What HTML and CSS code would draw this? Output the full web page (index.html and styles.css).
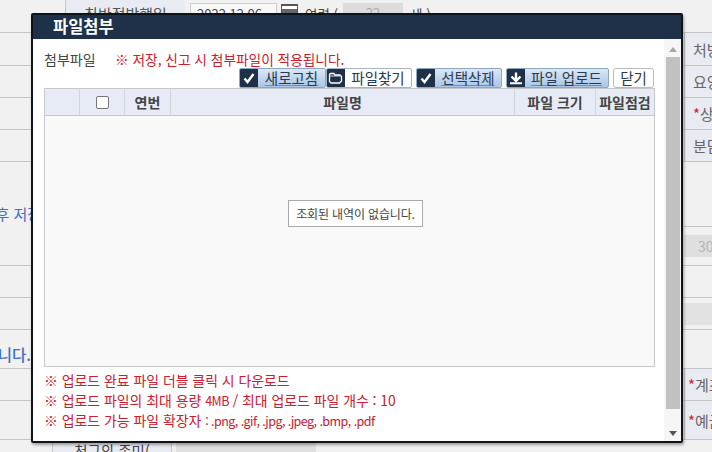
FILE: index.html
```html
<!DOCTYPE html>
<html lang="ko">
<head>
<meta charset="utf-8">
<title>파일첨부</title>
<link rel="stylesheet" href="styles.css">
</head>
<body>
<div class="form">
  <div class="row r1">
    <div class="top-fields">
      <span class="top-label">최반정발행일</span>
      <span class="top-date">2022.12.06</span>
      <span class="top-cal"></span>
      <span class="top-text">연령 (</span>
      <span class="top-age">22</span>
      <span class="top-text top-end">세 )</span>
    </div>
  </div>
  <div class="row r2"><span class="side">처방</span></div>
  <div class="row r3"><span class="side">요양</span></div>
  <div class="row r4"><span class="side"><i>*</i>상병</span></div>
  <div class="row r5"><span class="side">분담</span></div>
  <div class="row r6"><span class="blue">후 저장</span><span class="plain plain-low"><span class="field f30">30</span></span></div>
  <div class="row r7"></div>
  <div class="row r8"><span class="plain"><span class="field f-dark"></span></span></div>
  <div class="row r9"><span class="blue blue-bold">니다.</span></div>
  <div class="row r10"><span class="side side-l"><i>*</i>계조</span></div>
  <div class="row r11"><span class="side side-l"><i>*</i>예금</span></div>
  <div class="row r12"><span class="bottom-label">청구의 종미(</span><span class="bottom-input"></span></div>
</div>

<section class="modal">
  <header class="modal-head">파일첨부</header>
  <div class="modal-body">
    <div class="content">
      <div class="notice">
        <span class="notice-label">첨부파일</span>
        <span class="red">※ 저장, 신고 시 첨부파일이 적용됩니다.</span>
      </div>
      <div class="toolbar">
        <button class="btn b-refresh blue-btn"><span class="ico"><svg width="14" height="14" viewBox="0 0 14 14"><path d="M2.5 7.5 5.5 11 11.5 3" fill="none" stroke="#fff" stroke-width="2.4"/></svg></span><span class="lbl">새로고침</span></button>
        <button class="btn b-find"><span class="ico"><svg width="15" height="14" viewBox="0 0 15 14"><path d="M1.5 10.5V3.5L2.5 2.5H6L7 4H12L13.5 5.5V10L11.5 12H3Z" fill="none" stroke="#fff" stroke-width="1.3"/><path d="M2 5H12" stroke="#fff" stroke-width=".8"/></svg></span><span class="lbl">파일찾기</span></button>
        <button class="btn b-del blue-btn"><span class="ico"><svg width="14" height="14" viewBox="0 0 14 14"><path d="M2.5 7.5 5.5 11 11.5 3" fill="none" stroke="#fff" stroke-width="2.4"/></svg></span><span class="lbl">선택삭제</span></button>
        <button class="btn b-up blue-btn"><span class="ico"><svg width="14" height="14" viewBox="0 0 14 14"><path d="M7 1.5V8M2.5 5.5 7 10 11.5 5.5" fill="none" stroke="#fff" stroke-width="2.4"/><path d="M1 12.2H13" stroke="#fff" stroke-width="2"/></svg></span><span class="lbl">파일 업로드</span></button>
        <button class="btn b-close"><span class="lbl">닫기</span></button>
      </div>
      <div class="grid">
        <div class="grid-head">
          <div class="cell"></div>
          <div class="cell"><span class="check"></span></div>
          <div class="cell">연번</div>
          <div class="cell">파일명</div>
          <div class="cell">파일 크기</div>
          <div class="cell">파일점검</div>
        </div>
        <div class="grid-body"><div class="empty">조회된 내역이 없습니다.</div></div>
      </div>
      <div class="notes">
        <p>※ 업로드 완료 파일 더블 클릭 시 다운로드</p>
        <p>※ 업로드 파일의 최대 용량 <span class="latin">4MB</span> / 최대 업로드 파일 개수 : 10</p>
        <p>※ 업로드 가능 파일 확장자 <span class="latin">: .png, .gif, .jpg, .jpeg, .bmp, .pdf</span></p>
      </div>
    </div>
    <div class="scrollbar">
      <span class="arrow up"></span>
      <span class="thumb"></span>
      <span class="arrow down"></span>
    </div>
  </div>
</section>
</body>
</html>
```
FILE: styles.css
```css
* { box-sizing: border-box; }
html, body { margin: 0; height: 100%; }
body {
  width: 712px;
  height: 452px;
  overflow: hidden;
  position: relative;
  background: #f1f1f1;
  font-family: "Noto Sans CJK KR", "Noto Sans", sans-serif;
  color: #444;
}

/* dimmed form behind the dialog */
.form { display: flex; flex-direction: column; height: 452px; }
.row {
  display: flex;
  justify-content: space-between;
  align-items: center;
  border-bottom: 1px solid #c6c6c6;
  flex: none;
  font-size: 14px;
}
.r1 { height: 33px; border-bottom: none; box-shadow: inset 0 -1px 0 #c6c6c6; align-items: flex-start; }
.r2 { height: 33px; justify-content: flex-end; }
.r3, .r4, .r5 { height: 32px; justify-content: flex-end; }
.r6 { height: 104px; align-items: flex-end; }
.r7 { height: 32px; }
.r8 { height: 32px; justify-content: flex-end; }
.r9 { height: 39px; }
.r10 { height: 32px; justify-content: flex-end; background: linear-gradient(to right, transparent 684px, #e9ebf2 684px); }
.r11 { height: 39px; justify-content: flex-end; background: linear-gradient(to right, transparent 684px, #e9ebf2 684px); }
.r12 { flex: 1; border-bottom: none; justify-content: flex-start; align-items: flex-start; }

.top-fields { display: flex; align-items: flex-start; height: 33px; padding-left: 65px; }
.top-label { width: 120px; height: 32px; background: #e9ebf2; border-left: 1px solid #c6c6c6; text-align: center; line-height: 28px; font-size: 15px; color: #555; white-space: nowrap; }
.top-date { width: 87px; height: 24px; margin-left: 5px; margin-top: 3px; background: #f8f8f8; border: 1px solid #ccc; font-size: 13px; line-height: 20px; padding-left: 6px; white-space: nowrap; }
.top-cal { width: 17px; height: 17px; margin-left: 4px; margin-top: 4px; border: 1px solid #555; border-top-width: 2px; background: linear-gradient(#fff 3px, #666 3px); }
.top-text { font-size: 13.5px; margin-left: 7px; margin-top: 3px; line-height: 22px; width: 38px; white-space: nowrap; }
.top-age { width: 60px; height: 24px; margin-top: 3px; background: #dcdcdc; color: #aaa; font-size: 13px; line-height: 20px; text-align: center; }
.top-end { width: auto; }

.side { width: 28px; height: 100%; background: #e9ebf2; display: flex; align-items: center; padding-left: 8px; font-size: 15px; white-space: nowrap; overflow: hidden; color: #666; border-left: 1px solid #c6c6c6; }
.side-l { padding-left: 3px; background: transparent; }
.side i { color: #c23; font-style: normal; }
.blue { width: 41px; display: flex; justify-content: flex-end; white-space: nowrap; color: #3e6fc2; font-size: 15px; align-self: center; }
.blue-bold { font-weight: 500; width: 36px; padding-right: 5px; font-size: 15.5px; margin-top: 10px; }
.plain { width: 28px; overflow: hidden; display: flex; align-items: center; }
.plain-low { height: 39px; border-top: 1px solid #c6c6c6; }
.field { display: block; width: 28px; height: 22px; background: #dfdfdf; color: #b5b5b5; font-size: 14px; line-height: 22px; padding-left: 14px; }
.f-dark { background: #e2e2e2; }
.bottom-label { width: 120px; margin-left: 52px; height: 12px; background: #e9ebf2; text-align: center; line-height: 22px; font-size: 14.5px; overflow: hidden; border-left: 1px solid #c6c6c6; border-right: 1px solid #c6c6c6; white-space: nowrap; }
.bottom-input { width: 140px; height: 12px; margin-left: 4px; background: #e0e0e0; margin-top: 2px; }

/* dialog */
.modal {
  position: absolute;
  left: 31px;
  top: 13px;
  width: 652px;
  height: 430px;
  border: 2px solid #101418;
  border-radius: 2px;
  background: #fff;
  box-shadow: 1px 2px 3px rgba(0, 0, 0, .35);
  display: flex;
  flex-direction: column;
}
.modal-head {
  height: 24px;
  flex: none;
  background: #1e3148;
  color: #fff;
  font-size: 16.5px;
  font-weight: 700;
  line-height: 23px;
  padding-left: 20px;
}
.modal-body { flex: 1; display: flex; min-height: 0; }
.content { width: 631px; padding: 11px 9px 0 11px; }

.notice { height: 18px; display: flex; align-items: center; font-size: 14px; white-space: nowrap; }
.notice-label { width: 71px; color: #444; }
.red { color: #c8202f; font-size: 13.7px; }

.toolbar { display: flex; justify-content: flex-end; height: 20px; padding-right: 1px; }
.btn {
  display: flex;
  align-items: stretch;
  height: 20px;
  padding: 0;
  border: 1px solid #a9b4c2;
  border-radius: 2px;
  background: #fff;
  font: inherit;
  font-size: 14.5px;
  color: #2a3a4c;
  overflow: hidden;
}
.ico { width: 19px; flex: none; background: #1e3148; display: flex; align-items: center; justify-content: center; margin: -1px 0 -1px -1px; }
.lbl { flex: 1; text-align: center; line-height: 17px; white-space: nowrap; }
.blue-btn { background: linear-gradient(to bottom, #dbe7f6, #a9c6e8); border-color: #8fa7c0; }
.blue-btn .lbl { text-decoration: underline; text-decoration-color: #6d8eb4; text-underline-offset: 1px; }
.b-refresh { width: 87px; }
.b-find { width: 86px; }
.b-del { width: 86px; margin-left: 4px; }
.b-up { width: 103px; margin-left: 4px; }
.b-close { width: 41px; margin-left: 4px; border-radius: 3px; border-color: #bbb; }

.grid { height: 279px; border: 1px solid #c8c8c8; display: flex; flex-direction: column; }
.grid-head {
  display: grid;
  grid-template-columns: 35px 45px 46px 344px 81px 1fr;
  height: 27px;
  flex: none;
  background: #e6ebf5;
  border-bottom: 1px solid #c8c8c8;
}
.cell {
  display: flex;
  align-items: center;
  justify-content: center;
  font-size: 14px;
  font-weight: 700;
  color: #444;
  border-right: 1px solid #d0d4dc;
  white-space: nowrap;
}
.cell:last-child { border-right: none; }
.check { width: 13px; height: 13px; border: 1px solid #777; border-radius: 2px; background: #fff; }
.grid-body { flex: 1; background: #f9f9f9; display: flex; justify-content: center; padding: 84px 0 0 12px; }
.empty {
  width: 135px;
  height: 27px;
  background: #fff;
  border: 1px solid #aaa;
  font-size: 12px;
  letter-spacing: -.15px;
  line-height: 25px;
  text-align: center;
  color: #444;
  white-space: nowrap;
}

.notes { margin-top: 3px; color: #c8202f; font-size: 13.9px; }
.notes p { margin: 0; height: 20px; line-height: 20px; white-space: nowrap; }
.latin { font-size: 12.5px; letter-spacing: -.55px; }

.scrollbar { width: 17px; flex: none; background: #f6f6f6; display: flex; flex-direction: column; align-items: center; position: relative; }
.thumb { width: 14px; height: 352px; background: #c1c1c1; margin-top: 5px; flex: none; }
.arrow { width: 0; height: 0; border-left: 4px solid transparent; border-right: 4px solid transparent; flex: none; }
.arrow.up { border-bottom: 5px solid #a8a8a8; margin-top: 8px; }
.arrow.down { border-top: 5px solid #555; margin-top: 22px; }
```
